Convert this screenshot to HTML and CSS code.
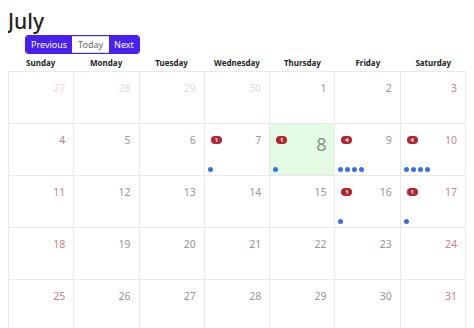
FILE: index.html
```html
<!DOCTYPE html>
<html lang="en">
<head>
    <meta charset="UTF-8">
    <title>Calendar</title>
    <link rel="stylesheet" href="styles.css">
</head>
<body>
    <h1 class="month-title">July</h1>

    <div class="toolbar">
        <div class="btn-group">
            <button class="btn btn-primary">Previous</button>
            <button class="btn btn-light">Today</button>
            <button class="btn btn-primary">Next</button>
        </div>
    </div>

    <div class="weekdays">
        <div>Sunday</div>
        <div>Monday</div>
        <div>Tuesday</div>
        <div>Wednesday</div>
        <div>Thursday</div>
        <div>Friday</div>
        <div>Saturday</div>
    </div>

    <div class="month-grid">
        <!-- week 1 -->
        <div class="day other weekend"><span class="num">27</span></div>
        <div class="day other"><span class="num">28</span></div>
        <div class="day other"><span class="num">29</span></div>
        <div class="day other"><span class="num">30</span></div>
        <div class="day"><span class="num">1</span></div>
        <div class="day"><span class="num">2</span></div>
        <div class="day weekend"><span class="num">3</span></div>

        <!-- week 2 -->
        <div class="day weekend"><span class="num">4</span></div>
        <div class="day"><span class="num">5</span></div>
        <div class="day"><span class="num">6</span></div>
        <div class="day">
            <span class="badge">1</span><span class="num">7</span>
            <div class="dots"><i></i></div>
        </div>
        <div class="day today">
            <span class="badge">1</span><span class="num">8</span>
            <div class="dots"><i></i></div>
        </div>
        <div class="day">
            <span class="badge">4</span><span class="num">9</span>
            <div class="dots"><i></i><i></i><i></i><i></i></div>
        </div>
        <div class="day weekend">
            <span class="badge">4</span><span class="num">10</span>
            <div class="dots"><i></i><i></i><i></i><i></i></div>
        </div>

        <!-- week 3 -->
        <div class="day weekend"><span class="num">11</span></div>
        <div class="day"><span class="num">12</span></div>
        <div class="day"><span class="num">13</span></div>
        <div class="day"><span class="num">14</span></div>
        <div class="day"><span class="num">15</span></div>
        <div class="day">
            <span class="badge">1</span><span class="num">16</span>
            <div class="dots"><i></i></div>
        </div>
        <div class="day weekend">
            <span class="badge">1</span><span class="num">17</span>
            <div class="dots"><i></i></div>
        </div>

        <!-- week 4 -->
        <div class="day weekend"><span class="num">18</span></div>
        <div class="day"><span class="num">19</span></div>
        <div class="day"><span class="num">20</span></div>
        <div class="day"><span class="num">21</span></div>
        <div class="day"><span class="num">22</span></div>
        <div class="day"><span class="num">23</span></div>
        <div class="day weekend"><span class="num">24</span></div>

        <!-- week 5 -->
        <div class="day weekend"><span class="num">25</span></div>
        <div class="day"><span class="num">26</span></div>
        <div class="day"><span class="num">27</span></div>
        <div class="day"><span class="num">28</span></div>
        <div class="day"><span class="num">29</span></div>
        <div class="day"><span class="num">30</span></div>
        <div class="day weekend"><span class="num">31</span></div>
    </div>
</body>
</html>
```

FILE: styles.css
```css
:root {
    --primary: #4a1ff2;
    --border: #e9e9e9;
    --text: #222;
    --muted: #969696;
    --faded: #dedede;
    --weekend: #c98080;
    --badge: #b8232f;
    --dot: #3a6ee8;
    --today: #e3fbe3;
}

* {
    box-sizing: border-box;
}

body {
    margin: 8px;
    font-family: "Noto Sans", "Open Sans", sans-serif;
    color: var(--text);
    background: #fff;
    overflow: hidden;
}

.month-title {
    margin: 0;
    font-size: 21px;
    font-weight: 500;
    line-height: 27px;
}

.toolbar {
    display: flex;
    padding-left: 17px;
}

.btn-group {
    display: flex;
    border-radius: 3px;
    overflow: hidden;
    border: 1px solid var(--primary);
}

.btn {
    font-family: inherit;
    font-size: 9px;
    line-height: 17px;
    padding: 0 5px;
    border: none;
    cursor: pointer;
}

.btn-primary {
    background: var(--primary);
    color: #fff;
}

.btn-light {
    background: #fff;
    color: #666;
    border-top: 1px solid #ddd;
    border-bottom: 1px solid #ddd;
    padding: 0 6px;
    line-height: 15px;
}

.weekdays {
    display: grid;
    grid-template-columns: repeat(7, 1fr);
    height: 17px;
    align-items: center;
    font-size: 8px;
    font-weight: 700;
    text-align: center;
}

.month-grid {
    display: grid;
    grid-template-columns: repeat(7, 1fr);
    grid-auto-rows: 52px;
    border-top: 1px solid var(--border);
    border-left: 1px solid var(--border);
}

.day {
    position: relative;
    border-right: 1px solid var(--border);
    border-bottom: 1px solid var(--border);
    padding: 9px 8px 0 6px;
    display: flex;
    justify-content: space-between;
    align-items: flex-start;
}

.num {
    margin-left: auto;
    font-size: 10.5px;
    line-height: 14px;
    color: var(--muted);
}

.weekend .num {
    color: var(--weekend);
}

.other .num {
    color: var(--faded);
}

.other.weekend .num {
    color: #f0dcdc;
}

.today {
    background: var(--today);
}

.today .num {
    font-size: 18px;
    line-height: 22px;
    color: #849484;
}

.badge {
    margin-top: 3px;
    background: var(--badge);
    color: #fff;
    font-size: 6px;
    font-weight: 700;
    line-height: 8px;
    height: 8px;
    min-width: 11px;
    padding: 0 2px;
    border-radius: 4px;
    text-align: center;
}

.dots {
    position: absolute;
    left: 3px;
    bottom: 3px;
    display: flex;
    gap: 2px;
}

.dots i {
    width: 5px;
    height: 5px;
    border-radius: 50%;
    background: var(--dot);
}
```
